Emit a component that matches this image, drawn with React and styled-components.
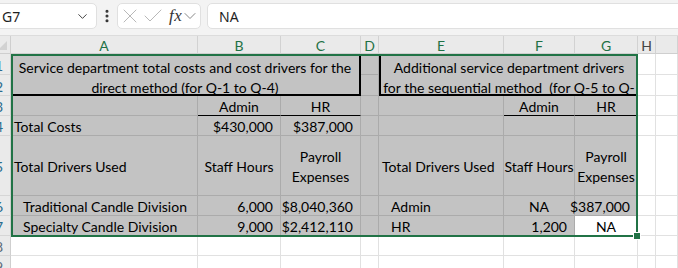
import React from 'react';
import styled, { createGlobalStyle } from 'styled-components';
import { ChevronDown, X, Check, EllipsisVertical } from 'lucide-react';

const GlobalStyle = createGlobalStyle`
  html, body {
    margin: 0;
    padding: 0;
    background: #ffffff;
    overflow: hidden;
  }
  body {
    font-family: 'Lato', 'Liberation Sans', sans-serif;
  }
`;

const Window = styled.div`
  width: 678px;
  height: 268px;
  display: flex;
  flex-direction: column;
  overflow: hidden;
  background: #ffffff;
`;

const FormulaBar = styled.div`
  height: 36px;
  box-sizing: border-box;
  flex-shrink: 0;
  background: #f3f3f3;
  border-bottom: 1px solid #dcdcdc;
  display: flex;
  align-items: flex-start;
  padding-top: 3px;
`;

const NameBox = styled.div`
  width: 103px;
  height: 26px;
  margin-left: -6px;
  box-sizing: border-box;
  background: #ffffff;
  border: 1px solid #e0e0e0;
  border-radius: 5px;
  display: flex;
  align-items: center;
  justify-content: space-between;
  padding: 0 6px 0 7px;
  font-family: 'Noto Sans', 'Liberation Sans', sans-serif;
  font-size: 14px;
  color: #1f1f1f;
`;

const Dots = styled.div`
  width: 20px;
  height: 26px;
  display: flex;
  align-items: center;
  justify-content: center;
  color: #333333;
`;

const Controls = styled.div`
  width: 84px;
  height: 26px;
  box-sizing: border-box;
  background: #ffffff;
  border: 1px solid #e0e0e0;
  border-radius: 5px;
  display: flex;
  align-items: center;
  color: #b8b8b8;
  svg {
    flex-shrink: 0;
  }
`;

const IconSlot = styled.span`
  display: flex;
  margin-left: ${p => p.$ml || 0}px;
`;

const Fx = styled.span`
  font-family: 'Liberation Serif', 'DejaVu Serif', serif;
  font-style: italic;
  font-size: 17px;
  color: #333333;
  margin-left: 4px;
  letter-spacing: 0.5px;
`;

const FormulaInput = styled.div`
  flex: 1;
  height: 26px;
  margin-left: 6px;
  margin-right: -10px;
  box-sizing: border-box;
  background: #ffffff;
  border: 1px solid #e0e0e0;
  border-radius: 5px;
  display: flex;
  align-items: center;
  padding-left: 11px;
  font-family: 'Noto Sans', 'Liberation Sans', sans-serif;
  font-size: 14px;
  color: #1f1f1f;
`;

const Sheet = styled.div`
  display: grid;
  grid-template-columns: 11px 187px 83px 80px 18px 125px 71px 63px 18px 1fr;
  grid-template-rows: 18px 21px 21px 20px 20px 60px 20px 20px 20px 20px;
  font-size: 14px;
  color: #000000;
`;

const Corner = styled.div`
  grid-column: 1;
  grid-row: 1;
  background: #eaeaea;
  border-right: 1px solid #cfcfcf;
  border-bottom: 1px solid #cfcfcf;
  box-sizing: border-box;
  position: relative;
  overflow: hidden;
  &::after {
    content: '';
    position: absolute;
    right: 3px;
    bottom: 3px;
    border-left: 9px solid transparent;
    border-bottom: 9px solid #d2d2d2;
  }
`;

const ColHead = styled.div`
  grid-column: ${p => p.$c};
  grid-row: 1;
  box-sizing: border-box;
  background: #eaeaea;
  border-right: 1px solid #d2d2d2;
  border-bottom: 1px solid #cfcfcf;
  display: flex;
  align-items: center;
  justify-content: center;
  padding-top: 1px;
  font-size: 14px;
  color: ${p => (p.$sel ? '#1e7145' : '#444444')};
`;

const RowHead = styled.div`
  grid-column: 1;
  grid-row: ${p => p.$r};
  box-sizing: border-box;
  background: #eaeaea;
  border-right: 1px solid #cfcfcf;
  border-bottom: 1px solid #d6d6d6;
  display: flex;
  align-items: center;
  justify-content: flex-end;
  overflow: hidden;
  padding-top: 2px;
  font-size: 14px;
  color: ${p => (p.$sel ? '#2a6c8e' : '#5a6b7a')};
  span {
    margin-right: 7px;
  }
`;

const justify = { left: 'flex-start', center: 'center', right: 'flex-end' };

const Cell = styled.div`
  grid-column: ${p => p.$c} / span ${p => p.$cs};
  grid-row: ${p => p.$r} / span ${p => p.$rs};
  box-sizing: border-box;
  min-width: 0;
  background: ${p => (p.$fill ? '#c3c3c3' : '#ffffff')};
  border-right: ${p => (p.$thickR ? '2px solid #000' : `1px solid ${p.$fill ? '#ababab' : '#e1e1e1'}`)};
  border-bottom: ${p =>
    p.$thickB ? '2px solid #000' : p.$rule ? '1px solid #000' : `1px solid ${p.$fill ? '#ababab' : '#e1e1e1'}`};
  border-left: ${p => (p.$thickL ? '2px solid #000' : 'none')};
  display: flex;
  flex-direction: column;
  justify-content: ${p => (p.$top ? 'flex-start' : 'center')};
  align-items: ${p => justify[p.$align]};
  padding: ${p => (p.$top ? '4px' : '2px')} ${p => (p.$align === 'right' ? 7 : 2)}px 0
    ${p => (p.$indent ? 12 : p.$align === 'left' ? 3 : 2)}px;
  overflow: ${p => (p.$top ? 'hidden' : 'visible')};
  white-space: pre;
  line-height: 20px;
  text-align: ${p => p.$align};
`;

const Selection = styled.div`
  grid-column: 2 / 9;
  grid-row: 2 / 9;
  border: 2px solid #217346;
  margin: 0 0 -1px 0;
  pointer-events: none;
  position: relative;
  z-index: 2;
`;

const Handle = styled.div`
  position: absolute;
  right: -5px;
  bottom: -5px;
  width: 6px;
  height: 6px;
  background: #217346;
  border: 1px solid #ffffff;
`;

const LETTERS = ['A', 'B', 'C', 'D', 'E', 'F', 'G', 'H', 'I'];

const content = {
  A1: {
    cs: 3,
    rs: 2,
    lines: ['Service department total costs and cost drivers for the', 'direct method (for Q-1 to Q-4)'],
    align: 'center',
    thickR: true,
    thickB: true,
    top: true,
  },
  E1: {
    cs: 3,
    rs: 2,
    lines: ['Additional service department drivers', 'for the sequential method  (for Q-5 to Q-', '6)'],
    align: 'center',
    thickL: true,
    thickB: true,
    top: true,
  },
  B3: { lines: ['Admin'], align: 'center', rule: true },
  C3: { lines: ['HR'], align: 'center', rule: true },
  F3: { lines: ['Admin'], align: 'center', rule: true },
  G3: { lines: ['HR'], align: 'center', rule: true },
  A4: { lines: ['Total Costs'] },
  B4: { lines: ['$430,000'], align: 'right' },
  C4: { lines: ['$387,000'], align: 'right' },
  A5: { lines: ['Total Drivers Used'] },
  B5: { lines: ['Staff Hours'], align: 'center' },
  C5: { lines: ['Payroll', 'Expenses'], align: 'center' },
  E5: { lines: ['Total Drivers Used'] },
  F5: { lines: ['Staff Hours'], align: 'center' },
  G5: { lines: ['Payroll', 'Expenses'], align: 'center' },
  A6: { lines: ['Traditional Candle Division'], indent: true },
  B6: { lines: ['6,000'], align: 'right' },
  C6: { lines: ['$8,040,360'], align: 'right' },
  E6: { lines: ['Admin'], indent: true },
  F6: { lines: ['NA'], align: 'center' },
  G6: { lines: ['$387,000'], align: 'right' },
  A7: { lines: ['Specialty Candle Division'], indent: true },
  B7: { lines: ['9,000'], align: 'right' },
  C7: { lines: ['$2,412,110'], align: 'right' },
  E7: { lines: ['HR'], indent: true },
  F7: { lines: ['1,200'], align: 'right' },
  G7: { lines: ['NA'], align: 'center', active: true },
};

const covered = new Set(['B1', 'C1', 'A2', 'B2', 'C2', 'F1', 'G1', 'E2', 'F2', 'G2']);

function buildCells() {
  const cells = [];
  for (let r = 1; r <= 9; r++) {
    LETTERS.forEach((letter, i) => {
      const ref = `${letter}${r}`;
      if (covered.has(ref)) return;
      const data = content[ref] || {};
      const inBlock = r <= 7 && i <= 6;
      cells.push(
        <Cell
          key={ref}
          $c={i + 2}
          $r={r + 1}
          $cs={data.cs || 1}
          $rs={data.rs || 1}
          $fill={inBlock && !data.active}
          $align={data.align || 'left'}
          $indent={data.indent}
          $thickR={data.thickR}
          $thickL={data.thickL}
          $thickB={data.thickB}
          $rule={data.rule}
          $top={data.top}
        >
          {(data.lines || []).map((line, k) => (
            <span key={k}>{line}</span>
          ))}
        </Cell>
      );
    });
  }
  return cells;
}

export default function App() {
  return (
    <Window>
      <GlobalStyle />
      <FormulaBar>
        <NameBox>
          <span>G7</span>
          <ChevronDown size={15} strokeWidth={1.6} color="#444" />
        </NameBox>
        <Dots>
          <EllipsisVertical size={16} strokeWidth={2.6} />
        </Dots>
        <Controls>
          <IconSlot $ml={0}>
            <X size={24} strokeWidth={1} />
          </IconSlot>
          <IconSlot $ml={-1}>
            <Check size={24} strokeWidth={1} />
          </IconSlot>
          <Fx>fx</Fx>
          <IconSlot $ml={-2}>
            <ChevronDown size={20} strokeWidth={1.2} color="#888" />
          </IconSlot>
        </Controls>
        <FormulaInput>NA</FormulaInput>
      </FormulaBar>
      <Sheet>
        <Corner />
        {LETTERS.slice(0, 8).map((l, i) => (
          <ColHead key={l} $c={i + 2} $sel={i < 7}>
            {l}
          </ColHead>
        ))}
        <ColHead $c={10} />
        {[1, 2, 3, 4, 5, 6, 7, 8, 9].map(n => (
          <RowHead key={n} $r={n + 1} $sel={n <= 7}>
            <span>{n}</span>
          </RowHead>
        ))}
        {buildCells()}
        <Selection>
          <Handle />
        </Selection>
      </Sheet>
    </Window>
  );
}
